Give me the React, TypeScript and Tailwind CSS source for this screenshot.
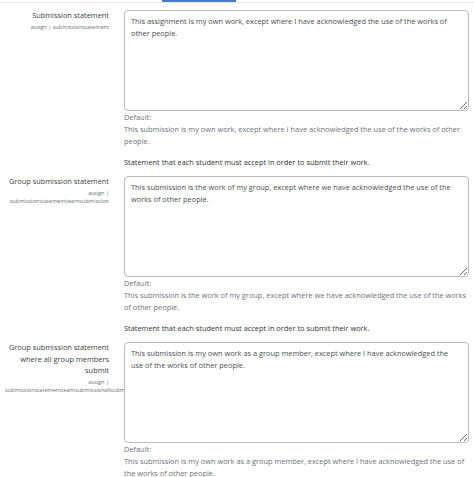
import React from "react";

type Row = {
  label: string[];
  code: string[];
  value: string;
  def: string;
};

const rows: Row[] = [
  {
    label: ["Submission statement"],
    code: ["assign | submissionstatement"],
    value:
      "This assignment is my own work, except where I have acknowledged the use of the works of other people.",
    def: "This submission is my own work, except where I have acknowledged the use of the works of other people.",
  },
  {
    label: ["Group submission statement"],
    code: ["assign |", "submissionstatementteamsubmission"],
    value:
      "This submission is the work of my group, except where we have acknowledged the use of the works of other people.",
    def: "This submission is the work of my group, except where we have acknowledged the use of the works of other people.",
  },
  {
    label: ["Group submission statement where all group members submit"],
    code: ["assign |", "submissionstatementteamsubmissionallsubmit"],
    value:
      "This submission is my own work as a group member, except where I have acknowledged the use of the works of other people.",
    def: "This submission is my own work as a group member, except where I have acknowledged the use of the works of other people.",
  },
];

export default function App() {
  return (
    <div
      className="w-[474px] h-[477px] overflow-hidden bg-white text-[#3a3f44]"
      style={{ fontFamily: '"Open Sans", "Noto Sans", sans-serif' }}
    >
      <div className="relative h-[3px] border-b border-[#e6e6e6]">
        <div className="absolute left-[162px] top-0 w-[74px] h-[2px] bg-[#3b7ed0]" />
      </div>
      <div className="pt-[7px]">
        {rows.map((r, i) => (
          <div key={i} className="flex h-[166px]">
            <div className="w-[104px] ml-[5px] text-right">
              <div className="text-[7.4px] leading-[11.5px] text-[#3a3f44]">
                {r.label.join(" ")}
              </div>
              <div className="mt-[1px]">
                {r.code.map((c, j) => (
                  <div
                    key={j}
                    className="text-[5.6px] leading-[8px] text-[#6b7178] whitespace-nowrap"
                    style={{ direction: "ltr" }}
                  >
                    {c}
                  </div>
                ))}
              </div>
            </div>
            <div className="ml-[15px] w-[345px] flex flex-col">
              <textarea
                defaultValue={r.value}
                className="block w-[345px] h-[101px] rounded-[4px] border border-[#bcbcbc] px-[6px] pt-[4px] text-[7.4px] leading-[12px] text-[#4a4f54] resize-y bg-white outline-none"
                style={{ fontFamily: '"Open Sans", "Noto Sans", sans-serif' }}
              />
              <div className="text-[7.4px] leading-[12px] text-[#6d747b]">Default:</div>
              <div className="text-[7.4px] leading-[12px] text-[#6d747b]">{r.def}</div>
              <div className="mt-[9px] text-[7.4px] leading-[12px] text-[#2f3438]">
                Statement that each student must accept in order to submit their work.
              </div>
            </div>
          </div>
        ))}
      </div>
    </div>
  );
}
